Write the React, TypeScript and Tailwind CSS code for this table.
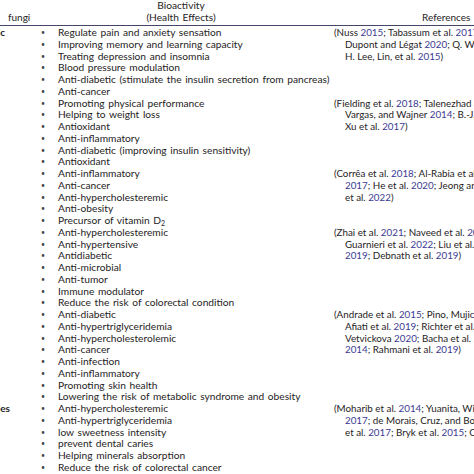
import React from 'react';

const items: React.ReactNode[] = [
  'Regulate pain and anxiety sensation',
  'Improving memory and learning capacity',
  'Treating depression and insomnia',
  'Blood pressure modulation',
  'Anti-diabetic (stimulate the insulin secretion from pancreas)',
  'Anti-cancer',
  'Promoting physical performance',
  'Helping to weight loss',
  'Antioxidant',
  'Anti-inflammatory',
  'Anti-diabetic (improving insulin sensitivity)',
  'Antioxidant',
  'Anti-inflammatory',
  'Anti-cancer',
  'Anti-hypercholesteremic',
  'Anti-obesity',
  <>
    Precursor of vitamin D<sub className="text-[7px] leading-none">2</sub>
  </>,
  'Anti-hypercholesteremic',
  'Anti-hypertensive',
  'Antidiabetic',
  'Anti-microbial',
  'Anti-tumor',
  'Immune modulator',
  'Reduce the risk of colorectal condition',
  'Anti-diabetic',
  'Anti-hypertriglyceridemia',
  'Anti-hypercholesterolemic',
  'Anti-cancer',
  'Anti-infection',
  'Anti-inflammatory',
  'Promoting skin health',
  'Lowering the risk of metabolic syndrome and obesity',
  'Anti-hypercholesteremic',
  'Anti-hypertriglyceridemia',
  'low sweetness intensity',
  'prevent dental caries',
  'Helping minerals absorption',
  'Reduce the risk of colorectal cancer',
];

// row index (1-based) where each reference block starts
const refs: { row: number; lines: string[] }[] = [
  {
    row: 1,
    lines: ['(Nuss 2015; Tabassum et al. 2017;', 'Dupont and Légat 2020; Q. Wang', 'H. Lee, Lin, et al. 2015)'],
  },
  {
    row: 7,
    lines: ['(Fielding et al. 2018; Talenezhad et', 'Vargas, and Wajner 2014; B.-J.', 'Xu et al. 2017)'],
  },
  {
    row: 13,
    lines: ['(Corrêa et al. 2018; Al-Rabia et al.', '2017; He et al. 2020; Jeong and', 'et al. 2022)'],
  },
  {
    row: 18,
    lines: ['(Zhai et al. 2021; Naveed et al. 2021;', 'Guarnieri et al. 2022; Liu et al.', '2019; Debnath et al. 2019)'],
  },
  {
    row: 25,
    lines: [
      '(Andrade et al. 2015; Pino, Mujica',
      'Afiati et al. 2019; Richter et al.',
      'Vetvickova 2020; Bacha et al. 2017;',
      '2014; Rahmani et al. 2019)',
    ],
  },
  {
    row: 33,
    lines: ['(Moharib et al. 2014; Yuanita, Wiknjo', '2017; de Morais, Cruz, and Bosco', 'et al. 2017; Bryk et al. 2015; Cao'],
  },
];

const labels: { row: number; text: string; pr: string }[] = [
  { row: 1, text: 'γ-Aminobutyric', pr: 'pr-[31px]' },
  { row: 33, text: 'Fructooligosaccharides', pr: 'pr-[26px]' },
];

const RefLine = ({ line, first }: { line: string; first: boolean }) => (
  <div className={`whitespace-nowrap ${first ? '' : 'pl-[11px]'}`}>
    {line.split(/(\d+)/).map((part, i) =>
      /^\d+$/.test(part) ? (
        <span key={i} className="text-[#3b3a92]">
          {part}
        </span>
      ) : (
        <span key={i}>{part}</span>
      )
    )}
  </div>
);

export default function App() {
  return (
    <div
      className="w-[474px] h-[474px] overflow-hidden bg-white text-[#262324] text-[10px] leading-[11.76px]"
      style={{ fontFamily: 'Lato, "Liberation Sans", sans-serif' }}
    >
      {/* Header */}
      <div className="grid grid-cols-[36px_290px_148px] h-[23.5px]">
        <div className="flex items-end pl-[8px] whitespace-nowrap">fungi</div>
        <div className="flex flex-col items-center text-[10.2px] [word-spacing:1px]">
          <div>Bioactivity</div>
          <div>(Health Effects)</div>
        </div>
        <div className="flex items-end pl-[96px] whitespace-nowrap">References</div>
      </div>
      <div className="mt-[1.5px] h-px bg-[#45456a]" />

      {/* Body */}
      <div className="mt-[1px] grid grid-cols-[36px_14px_284px_140px] auto-rows-[11.76px]">
        {labels.map((l) => (
          <div
            key={l.text}
            className={`col-start-1 flex justify-end whitespace-nowrap font-bold ${l.pr}`}
            style={{ gridRow: l.row }}
          >
            {l.text}
          </div>
        ))}
        {items.map((t, i) => (
          <React.Fragment key={i}>
            <div className="col-start-2 text-center text-[7px] text-[#444]" style={{ gridRow: i + 1 }}>
              •
            </div>
            <div
              className="col-start-3 pl-[8px] whitespace-nowrap text-[10.2px] [word-spacing:1px]"
              style={{ gridRow: i + 1 }}
            >
              {t}
            </div>
          </React.Fragment>
        ))}
        {refs.map((r) => (
          <div
            key={r.row}
            className="col-start-4 text-[9.8px]"
            style={{ gridRow: `${r.row} / span ${r.lines.length}` }}
          >
            {r.lines.map((line, i) => (
              <RefLine key={i} line={line} first={i === 0} />
            ))}
          </div>
        ))}
      </div>
    </div>
  );
}
